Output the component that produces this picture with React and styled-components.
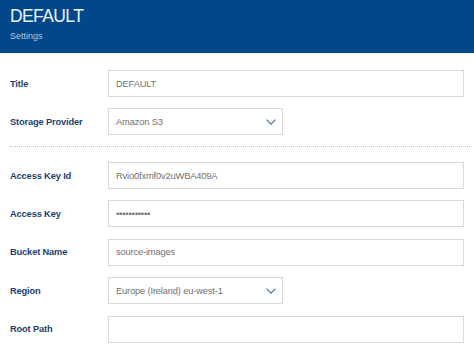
import React from 'react';
import styled, { createGlobalStyle } from 'styled-components';

const Global = createGlobalStyle`
  html, body { margin: 0; padding: 0; background: #fff; }
  body { font-family: "Liberation Sans", Arial, sans-serif; }
`;

const Page = styled.div`
  width: 474px;
  height: 348px;
  overflow: hidden;
  background: #fff;
`;

const Header = styled.header`
  height: 53px;
  box-sizing: border-box;
  background: #03478b;
  padding: 6px 10px 0;
`;

const Heading = styled.h1`
  margin: 0;
  font-size: 17.5px;
  line-height: 20px;
  font-weight: normal;
  color: #eaf4ff;
  letter-spacing: -0.6px;
`;

const Sub = styled.div`
  margin-top: 4px;
  font-size: 9px;
  line-height: 12px;
  color: #b4c8dc;
`;

const Form = styled.form`
  display: flex;
  flex-direction: column;
  gap: 11px;
  padding: 17px 10px 0;
  margin: 0;
`;

const Group = styled.div`
  display: flex;
  flex-direction: column;
  gap: ${(p) => p.$gap}px;
`;

const Row = styled.div`
  display: flex;
  align-items: center;
`;

const Label = styled.label`
  width: 98px;
  flex: none;
  font-size: 9.3px;
  letter-spacing: -0.15px;
  font-weight: bold;
  color: #1d3f70;
`;

const Input = styled.input`
  box-sizing: border-box;
  width: 356px;
  height: 27px;
  border: 1px solid #d9d9d9;
  border-radius: 0;
  padding: 0 7px;
  margin: 0;
  font: 9.3px "Liberation Sans", Arial, sans-serif;
  letter-spacing: -0.15px;
  color: #707070;
  background: #fff;
  outline: none;
`;

const Select = styled.div`
  box-sizing: border-box;
  width: 175px;
  height: 27px;
  border: 1px solid #d9d9d9;
  padding: 0 6px 0 7px;
  display: flex;
  align-items: center;
  justify-content: space-between;
  font-size: 9.3px;
  letter-spacing: -0.15px;
  color: #707070;
  background: #fff;
`;

const Separator = styled.div`
  border-top: 1px dotted #c4c4c4;
  margin: 0 -8px 4px 0;
`;

const Chevron = () => (
  <svg width="10" height="6" viewBox="0 0 10 6">
    <polyline points="0.6,0.6 5,5.2 9.4,0.6" fill="none" stroke="#4c77a3" strokeWidth="1.2" />
  </svg>
);

const TextRow = ({ label, value }) => (
  <Row>
    <Label>{label}</Label>
    <Input type="text" defaultValue={value} readOnly />
  </Row>
);

const SelectRow = ({ label, value }) => (
  <Row>
    <Label>{label}</Label>
    <Select>
      <span>{value}</span>
      <Chevron />
    </Select>
  </Row>
);

export default function App() {
  return (
    <Page>
      <Global />
      <Header>
        <Heading>DEFAULT</Heading>
        <Sub>Settings</Sub>
      </Header>
      <Form>
        <Group $gap={11}>
          <TextRow label="Title" value="DEFAULT" />
          <SelectRow label="Storage Provider" value="Amazon S3" />
        </Group>
        <Separator />
        <Group $gap={11.4}>
          <TextRow label="Access Key Id" value="Rvio0fxmf0v2uWBA409A" />
          <TextRow label="Access Key" value="•••••••••••" />
          <TextRow label="Bucket Name" value="source-images" />
          <SelectRow label="Region" value="Europe (Ireland) eu-west-1" />
          <TextRow label="Root Path" value="" />
        </Group>
      </Form>
    </Page>
  );
}
